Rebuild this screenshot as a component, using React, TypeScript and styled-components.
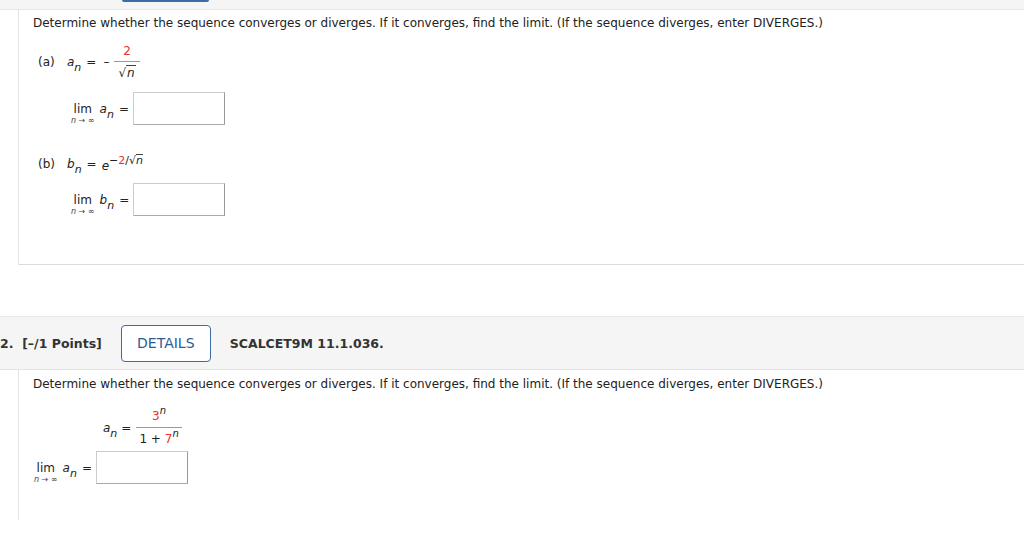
import React from 'react';
import styled, { createGlobalStyle } from 'styled-components';

const GlobalStyle = createGlobalStyle`
    html, body {
        margin: 0;
        padding: 0;
        background: #ffffff;
    }
    body {
        font-family: "DejaVu Sans", Verdana, sans-serif;
        font-size: 12px;
        color: #222222;
    }
`;

const Page = styled.div`
    width: 1024px;
    height: 533px;
    overflow: hidden;
    display: flex;
    flex-direction: column;
`;

const PrevHeader = styled.div`
    height: 9px;
    background: #f5f5f5;
    border-bottom: 1px solid #e6e6e6;
    padding-left: 122px;
    display: flex;
    align-items: flex-start;
`;

const ButtonTail = styled.div`
    width: 87px;
    height: 2px;
    background: #3a6ea5;
    border-radius: 0 0 2px 2px;
`;

const QuestionBody = styled.div<{ $height: number; $closed?: boolean; $top: number }>`
    margin-left: 18px;
    height: ${p => p.$height}px;
    box-sizing: border-box;
    border-left: 1px solid #e3e3e3;
    border-bottom: ${p => (p.$closed ? '1px solid #dcdcdc' : 'none')};
    padding: ${p => p.$top}px 0 0 14px;
`;

const Prompt = styled.div`
    line-height: 16px;
    white-space: nowrap;
`;

const Gap = styled.div<{ $h: number }>`
    height: ${p => p.$h}px;
    flex-shrink: 0;
`;

const Header = styled.div`
    height: 54px;
    box-sizing: border-box;
    background: #f5f5f5;
    border-top: 1px solid #e8e8e8;
    border-bottom: 1px solid #e3e3e3;
    display: flex;
    align-items: center;
    font-weight: bold;
    font-size: 12.5px;
    color: #333333;
`;

const Points = styled.span`
    margin-right: 19px;
    white-space: nowrap;
`;

const DetailsButton = styled.button`
    width: 90px;
    height: 37px;
    box-sizing: border-box;
    border: 1px solid #3a6ea5;
    border-radius: 4px;
    background: #ffffff;
    color: #2c5d92;
    font-family: "DejaVu Sans", Verdana, sans-serif;
    font-size: 14px;
    font-weight: normal;
    margin-right: 19px;
    padding: 0;
    cursor: pointer;
`;

const Code = styled.span`
    white-space: nowrap;
`;

const Row = styled.div<{ $indent: number; $top: number }>`
    display: flex;
    align-items: center;
    margin-left: ${p => p.$indent}px;
    margin-top: ${p => p.$top}px;
    white-space: nowrap;
`;

const Label = styled.span`
    width: 29px;
`;

const Term = styled.span`
    line-height: 16px;
`;

const Var = styled.span`
    font-style: italic;
`;

const Sub = styled.span`
    font-style: italic;
    font-size: 11px;
    vertical-align: -5px;
    line-height: 0;
`;

const Sup = styled.span<{ $size?: number }>`
    font-size: ${p => p.$size ?? 10}px;
    vertical-align: 6px;
    line-height: 0;
`;

const SupVar = styled.span`
    font-style: italic;
`;

const Op = styled.span<{ $l?: number; $r?: number }>`
    margin: 0 ${p => p.$r ?? 6}px 0 ${p => p.$l ?? 6}px;
`;

const Red = styled.span`
    color: #e8302b;
`;

const Fraction = styled.span`
    display: inline-flex;
    flex-direction: column;
    align-items: center;
`;

const Numer = styled.span<{ $gap: number }>`
    line-height: 16px;
    padding-bottom: ${p => p.$gap}px;
`;

const Denom = styled.span<{ $pad: number }>`
    line-height: 16px;
    padding: 3px ${p => p.$pad}px 0;
    border-top: 1px solid #999999;
    align-self: stretch;
    text-align: center;
`;

const Overline = styled.span`
    border-top: 1px solid #444444;
    font-style: italic;
    padding: 0 1px;
`;

const SmallOverline = styled.span`
    border-top: 1px solid #444444;
    font-style: italic;
    line-height: 11px;
    display: inline-block;
`;

const Lim = styled.span`
    display: inline-flex;
    flex-direction: column;
    align-items: center;
    margin-right: 5px;
`;

const LimWord = styled.span`
    line-height: 14px;
`;

const LimUnder = styled.span`
    font-size: 8px;
    line-height: 9px;
    margin-bottom: -9px;
    color: #444444;
`;

const Answer = styled.input`
    width: 92px;
    height: 33px;
    box-sizing: border-box;
    border: 1px solid #cccccc;
    border-right-color: #999999;
    border-bottom-color: #aaaaaa;
    margin-left: 4px;
    padding: 0 4px;
    font-family: inherit;
    font-size: 12px;
`;

const PROMPT =
    'Determine whether the sequence converges or diverges. If it converges, find the limit. (If the sequence diverges, enter DIVERGES.)';

function Indexed({ v }: { v: string }) {
    return (
        <Term>
            <Var>{v}</Var>
            <Sub>n</Sub>
        </Term>
    );
}

function LimOf({ v }: { v: string }) {
    return (
        <>
            <Lim>
                <LimWord>lim</LimWord>
                <LimUnder>
                    <i>n</i> → ∞
                </LimUnder>
            </Lim>
            <Indexed v={v} />
            <Op $l={5} $r={0}>=</Op>
        </>
    );
}

export default function App() {
    return (
        <Page>
            <GlobalStyle />
            <PrevHeader>
                <ButtonTail />
            </PrevHeader>
            <QuestionBody $height={255} $top={5} $closed>
                <Prompt>{PROMPT}</Prompt>
                <Row $indent={5} $top={12}>
                    <Label>(a)</Label>
                    <Indexed v="a" />
                    <Op $l={5} $r={7}>=</Op>
                    <span>–</span>
                    <Fraction style={{ marginLeft: 5 }}>
                        <Numer $gap={2}>
                            <Red>2</Red>
                        </Numer>
                        <Denom $pad={4}>
                            √<Overline>n</Overline>
                        </Denom>
                    </Fraction>
                </Row>
                <Row $indent={38} $top={11}>
                    <LimOf v="a" />
                    <Answer type="text" aria-label="lim a_n" />
                </Row>
                <Row $indent={5} $top={29}>
                    <Label>(b)</Label>
                    <Indexed v="b" />
                    <Op $l={5} $r={5}>=</Op>
                    <Term>
                        <Var>e</Var>
                        <Sup $size={11}>
                            −<Red>2</Red>/√<SmallOverline>n</SmallOverline>
                        </Sup>
                    </Term>
                </Row>
                <Row $indent={38} $top={9}>
                    <LimOf v="b" />
                    <Answer type="text" aria-label="lim b_n" />
                </Row>
            </QuestionBody>
            <Gap $h={51} />
            <Header>
                <Points>2.&nbsp; [–/1 Points]</Points>
                <DetailsButton type="button">DETAILS</DetailsButton>
                <Code>SCALCET9M 11.1.036.</Code>
            </Header>
            <QuestionBody $height={150} $top={6}>
                <Prompt>{PROMPT}</Prompt>
                <Row $indent={70} $top={16}>
                    <Indexed v="a" />
                    <Op $l={4} $r={5}>=</Op>
                    <Fraction>
                        <Numer $gap={3}>
                            <Red>3</Red>
                            <Sup>
                                <SupVar>n</SupVar>
                            </Sup>
                        </Numer>
                        <Denom $pad={3}>
                            1 + <Red>7</Red>
                            <Sup>
                                <SupVar>n</SupVar>
                            </Sup>
                        </Denom>
                    </Fraction>
                </Row>
                <Row $indent={1} $top={4}>
                    <LimOf v="a" />
                    <Answer type="text" aria-label="lim a_n" />
                </Row>
            </QuestionBody>
        </Page>
    );
}
